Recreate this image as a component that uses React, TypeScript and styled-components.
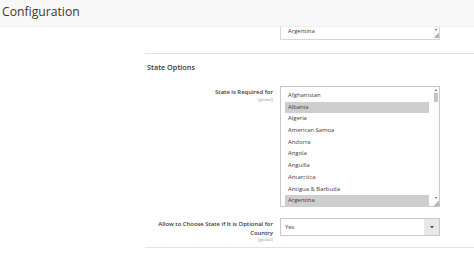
import React from 'react'
import styled, { createGlobalStyle } from 'styled-components'

const countries = [
  'Afghanistan',
  'Albania',
  'Algeria',
  'American Samoa',
  'Andorra',
  'Angola',
  'Anguilla',
  'Antarctica',
  'Antigua & Barbuda',
  'Argentina',
]
const selected = ['Albania', 'Argentina']

const GlobalStyle = createGlobalStyle`
  html, body {
    margin: 0;
    padding: 0;
    background: #ffffff;
    font-family: 'Open Sans', 'Liberation Sans', sans-serif;
    color: #303030;
    overflow: hidden;
  }
`

const Page = styled.div`
  width: 474px;
  height: 258px;
  overflow: hidden;
  background: #ffffff;
`

const Header = styled.header`
  height: 26px;
  background: #f8f8f8;
  border-bottom: 1px solid #efefef;
  padding-left: 2px;
  font-size: 12.2px;
  line-height: 24px;
  color: #41362f;
`

const Content = styled.div`
  padding-left: 145px;
`

const Field = styled.div<{ $top?: number }>`
  display: grid;
  grid-template-columns: 128px 160px;
  column-gap: 7px;
  margin-top: ${(p) => p.$top ?? 0}px;
`

const Label = styled.div`
  text-align: right;
  font-size: 5.9px;
  font-weight: 600;
  color: #3a3a3a;
  line-height: 8.5px;
  padding-top: 2px;
`

const Scope = styled.div`
  font-size: 4.3px;
  font-weight: 400;
  color: #999999;
  line-height: 5px;
`

const CutBox = styled.div`
  height: 12px;
  border: 1px solid #d6d6d6;
  border-top: none;
  display: flex;
`

const ListBox = styled.div`
  height: 121px;
  border: 1px solid #c8c8c8;
  display: flex;
  padding: 3px 0 0 4px;
  box-sizing: border-box;
`

const Options = styled.div`
  flex: 1;
  display: flex;
  flex-direction: column;
`

const Option = styled.div<{ $on?: boolean }>`
  height: 11.7px;
  line-height: 11.7px;
  padding-left: 3px;
  margin-right: 4px;
  font-size: 5.9px;
  color: #404040;
  background: ${(p) => (p.$on ? '#cecece' : 'transparent')};
`

const Scrollbar = styled.div<{ $inset?: boolean }>`
  width: 6px;
  margin-top: ${(p) => (p.$inset ? -3 : 0)}px;
  display: flex;
  flex-direction: column;
  align-items: center;
  background: #fafafa;
`

const Arrow = styled.div`
  width: 6px;
  height: 6px;
  display: flex;
  align-items: center;
  justify-content: center;
  font-size: 4px;
  color: #555;
  line-height: 1;
`

const Thumb = styled.div<{ $h: number }>`
  width: 4px;
  height: ${(p) => p.$h}px;
  background: #c4c4c4;
`

const Grip = styled.div`
  width: 6px;
  height: 5px;
  background: linear-gradient(135deg, transparent 50%, #b5b5b5 50%);
`

const Spacer = styled.div`
  flex: 1;
`

const CutText = styled.div`
  flex: 1;
  font-size: 5.9px;
  line-height: 8px;
  padding-left: 7px;
  color: #404040;
`

const Select = styled.div`
  height: 18px;
  border: 1px solid #c8c8c8;
  box-sizing: border-box;
  display: flex;
  align-items: center;
`

const SelectValue = styled.div`
  flex: 1;
  padding-left: 4px;
  font-size: 5.9px;
  color: #404040;
`

const SelectButton = styled.div`
  width: 15px;
  height: 100%;
  background: #e8e8e8;
  display: flex;
  align-items: center;
  justify-content: center;
`

const Divider = styled.div<{ $top: number }>`
  height: 1px;
  background: #e3e3e3;
  margin-top: ${(p) => p.$top}px;
`

const SectionTitle = styled.div`
  padding-left: 2px;
  margin-top: 8px;
  font-size: 7.3px;
  font-weight: 600;
  color: #41362f;
  line-height: 10px;
`

const ArrowDown = () => (
  <svg width='4' height='2.5' viewBox='0 0 4 2.5'>
    <path d='M0 0 H4 L2 2.5 Z' fill='#514943' />
  </svg>
)

export default function App() {
  return (
    <Page>
      <GlobalStyle />
      <Header>Configuration</Header>
      <Content>
        <Field>
          <div />
          <CutBox>
            <CutText>Argentina</CutText>
            <Scrollbar>
              <Arrow>▾</Arrow>
              <Grip />
            </Scrollbar>
          </CutBox>
        </Field>
        <Divider $top={13} />
        <SectionTitle>State Options</SectionTitle>

        <Field $top={14}>
          <Label>
            State is Required for
            <Scope>[global]</Scope>
          </Label>
          <ListBox>
            <Options>
              {countries.map((c) => (
                <Option key={c} $on={selected.includes(c)}>
                  {c}
                </Option>
              ))}
            </Options>
            <Scrollbar $inset>
              <Arrow>▴</Arrow>
              <Thumb $h={9} />
              <Spacer />
              <Arrow>▾</Arrow>
              <Grip />
            </Scrollbar>
          </ListBox>
        </Field>

        <Field $top={11}>
          <Label>
            Allow to Choose State if It is Optional for Country
            <Scope>[global]</Scope>
          </Label>
          <Select>
            <SelectValue>Yes</SelectValue>
            <SelectButton>
              <ArrowDown />
            </SelectButton>
          </Select>
        </Field>
        <Divider $top={5} />
      </Content>
    </Page>
  )
}
